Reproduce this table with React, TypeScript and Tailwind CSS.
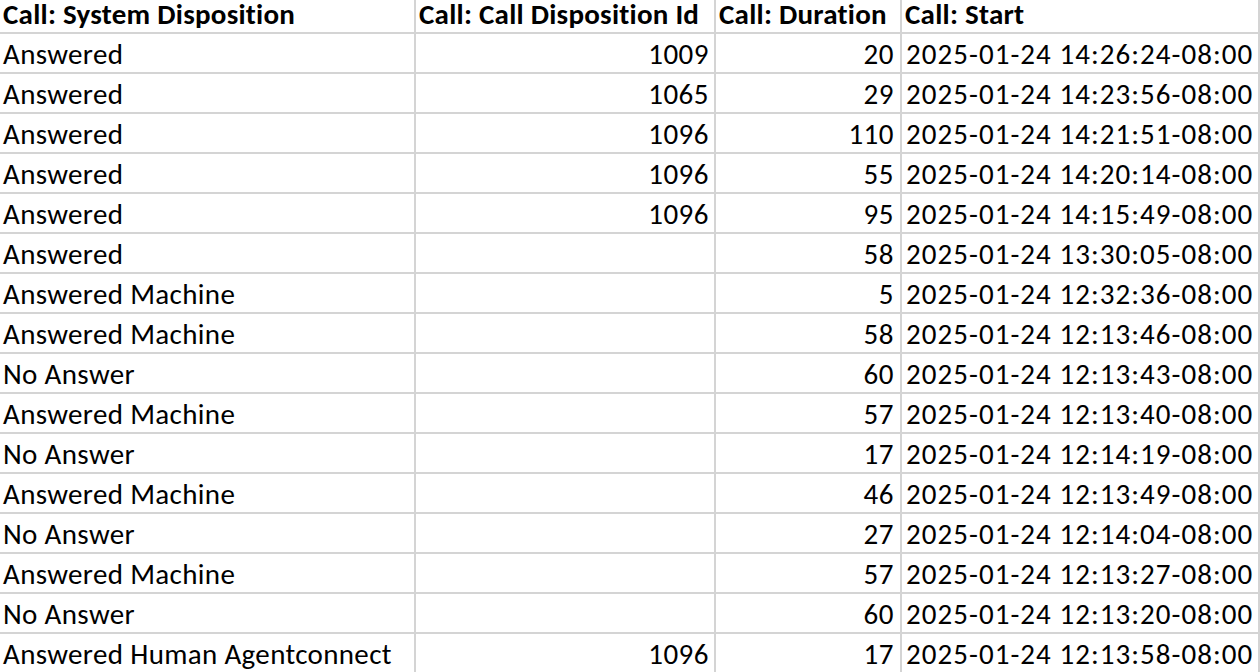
const rows: [string, string, string, string][] = [
  ["Answered", "1009", "20", "2025-01-24 14:26:24-08:00"],
  ["Answered", "1065", "29", "2025-01-24 14:23:56-08:00"],
  ["Answered", "1096", "110", "2025-01-24 14:21:51-08:00"],
  ["Answered", "1096", "55", "2025-01-24 14:20:14-08:00"],
  ["Answered", "1096", "95", "2025-01-24 14:15:49-08:00"],
  ["Answered", "", "58", "2025-01-24 13:30:05-08:00"],
  ["Answered Machine", "", "5", "2025-01-24 12:32:36-08:00"],
  ["Answered Machine", "", "58", "2025-01-24 12:13:46-08:00"],
  ["No Answer", "", "60", "2025-01-24 12:13:43-08:00"],
  ["Answered Machine", "", "57", "2025-01-24 12:13:40-08:00"],
  ["No Answer", "", "17", "2025-01-24 12:14:19-08:00"],
  ["Answered Machine", "", "46", "2025-01-24 12:13:49-08:00"],
  ["No Answer", "", "27", "2025-01-24 12:14:04-08:00"],
  ["Answered Machine", "", "57", "2025-01-24 12:13:27-08:00"],
  ["No Answer", "", "60", "2025-01-24 12:13:20-08:00"],
  ["Answered Human Agentconnect", "1096", "17", "2025-01-24 12:13:58-08:00"],
];

const headers = [
  "Call: System Disposition",
  "Call: Call Disposition Id",
  "Call: Duration",
  "Call: Start",
];

// spreadsheet cell: text sits on the bottom edge like Excel does
const cell =
  "flex items-end border-r-2 border-b-2 border-[#d4d4d4] whitespace-nowrap leading-[29px] pb-[3px]";

export default function App() {
  return (
    <div className="w-[1260px] h-[672px] overflow-hidden bg-white text-black text-[29px] font-['Carlito','Calibri','Lato',sans-serif]">
      <div className="grid grid-cols-[416px_300px_186px_1fr]">
        {headers.map((h) => (
          <div key={h} className={`${cell} h-[34px] font-bold pl-[3px] tracking-[0.25px]`}>
            {h}
          </div>
        ))}
        {rows.map((r, i) => (
          <div key={i} className="contents">
            <div className={`${cell} h-[40px] pl-[3px] tracking-[0.35px]`}>{r[0]}</div>
            <div className={`${cell} h-[40px] justify-end pr-[5px] tracking-[0.5px]`}>{r[1]}</div>
            <div className={`${cell} h-[40px] justify-end pr-[6px] tracking-[0.5px]`}>{r[2]}</div>
            <div className={`${cell} h-[40px] pl-[4px] tracking-[1.05px]`}>{r[3]}</div>
          </div>
        ))}
      </div>
    </div>
  );
}
